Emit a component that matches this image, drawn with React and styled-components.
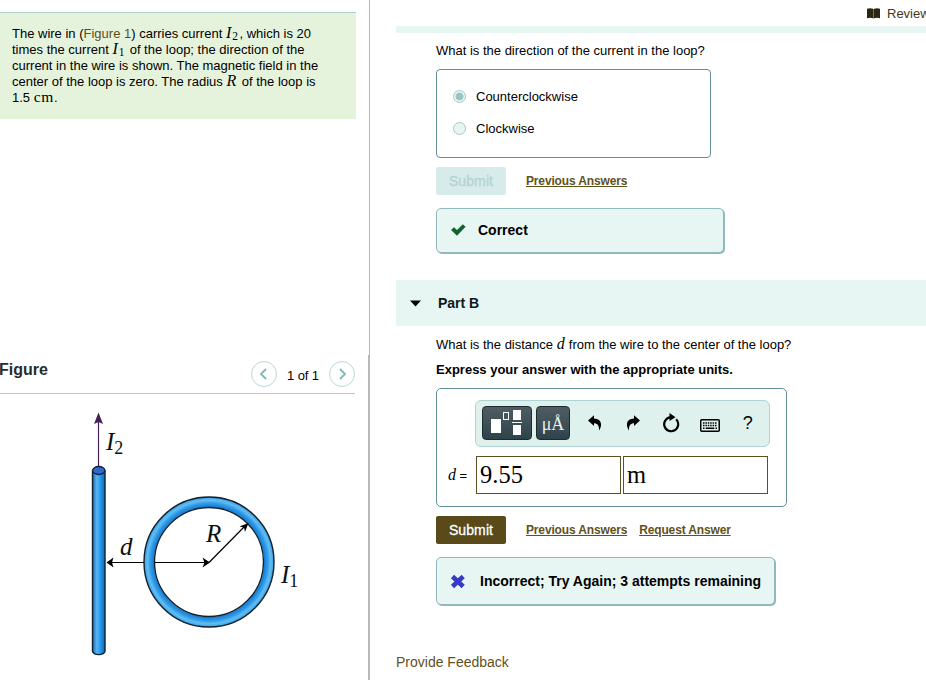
import React from "react";
import styled, { createGlobalStyle } from "styled-components";

const GlobalStyle = createGlobalStyle`
  * {
    box-sizing: border-box;
  }

  body {
    margin: 0;
    background-color: #fff;
    color: #000;
    font-family: "Liberation Sans", Arial, sans-serif;
    font-size: 13px;
    overflow: hidden;
  }

  svg {
    flex-shrink: 0;
  }
`;

const Page = styled.div`
  display: flex;
  width: 926px;
  height: 680px;
  overflow: hidden;
`;

const LeftPane = styled.div`
  display: flex;
  flex-direction: column;
  flex: 0 0 370px;
`;

const ProblemArea = styled.section`
  height: 355px;
  padding: 12px 13px 0 0;
  border-right: 1px solid #b9b9b3;
`;

const Problem = styled.div`
  height: 107px;
  padding: 13px 0 0 12px;
  border-top: 1px solid #b0cdd0;
  background-color: #e6f3dc;
  line-height: 16px;
`;

const Line = styled.div`
  white-space: nowrap;
  height: ${(props) => props.$height || "16px"};
  line-height: ${(props) => props.$height || "16px"};
  font-weight: ${(props) => (props.$bold ? "bold" : "normal")};
`;

const FigureLink = styled.a`
  color: #5d4f1a;
`;

const Var = styled.span`
  margin-right: ${(props) => props.$gap || "0"};
  font-family: "Liberation Serif", "Times New Roman", serif;
  font-style: ${(props) => (props.$upright ? "normal" : "italic")};
  font-size: ${(props) => props.$size || "16px"};
  line-height: 1px;
  letter-spacing: ${(props) => props.$spacing || "0"};

  sub {
    margin-left: 1px;
    font-size: 11.5px;
    font-style: normal;
    line-height: 0;
    vertical-align: -2px;
  }
`;

const FigureArea = styled.section`
  flex: 1;
  padding-right: 13px;
  border-right: 2px solid #b9b9b3;
`;

const FigureHeader = styled.header`
  display: flex;
  align-items: flex-start;
  justify-content: space-between;
  height: 39px;
  border-bottom: 1px solid #a9cfd1;
`;

const FigureTitle = styled.h2`
  margin: 5px 0 0 -1px;
  font-size: 16px;
  line-height: 20px;
  color: #262c2e;
`;

const Pager = styled.div`
  display: flex;
  align-items: center;
  gap: 10px;
  margin-top: 6px;

  span {
    padding-top: 2px;
    letter-spacing: -0.1px;
    white-space: nowrap;
  }
`;

const PagerButton = styled.button`
  display: flex;
  align-items: center;
  justify-content: center;
  width: 26px;
  height: 26px;
  padding: 0;
  border: 1px solid #b5dadb;
  border-radius: 50%;
  background-color: #fff;
`;

const Drawing = styled.svg`
  display: block;

  text {
    font-family: "Liberation Serif", "Times New Roman", serif;
    font-size: 25px;
    font-style: italic;
    fill: #0c1012;
  }

  .index {
    font-size: 18px;
    font-style: normal;
  }
`;

const RightPane = styled.main`
  display: flex;
  flex-direction: column;
  flex: 1;
  min-width: 0;
  padding-left: 26px;
`;

const TopBar = styled.div`
  display: flex;
  align-items: center;
  gap: 7px;
  height: 26px;
  padding-left: 471px;
  white-space: nowrap;
  color: #40391c;
`;

const Stripe = styled.div`
  height: 7px;
  background-color: #e8f6f3;
`;

const Part = styled.section`
  display: flex;
  flex-direction: column;
  align-items: flex-start;
  height: ${(props) => props.$height};
  padding: ${(props) => props.$top} 0 0 40px;
`;

const Choices = styled.div`
  display: flex;
  flex-direction: column;
  gap: 12px;
  width: 275px;
  height: 89px;
  margin-top: 9px;
  padding: 16px 0 0 16px;
  border: 1px solid #648f96;
  border-radius: 4px;
`;

const Choice = styled.label`
  display: flex;
  align-items: center;
  gap: 10px;
  height: 20px;
`;

const Radio = styled.span`
  width: 13px;
  height: 13px;
  border: 1px solid #a3c9cb;
  border-radius: 50%;
  background-color: #e8f6f3;
  background-image: ${(props) =>
    props.$checked
      ? "radial-gradient(circle, #9bc3c6 3.5px, transparent 4.3px)"
      : "none"};
`;

const Actions = styled.div`
  display: flex;
  align-items: center;
  height: 28px;
  margin-top: 9px;
`;

const Submit = styled.button`
  width: 70px;
  height: 28px;
  padding: 0;
  margin-right: 20px;
  border: 0;
  border-radius: 2px;
  font-family: inherit;
  font-size: 14px;
  letter-spacing: 0.1px;
  -webkit-text-stroke: 0.3px;
  color: ${(props) => (props.disabled ? "#b4d3d5" : "#fff")};
  background-color: ${(props) => (props.disabled ? "#d7ebea" : "#5a4a1a")};
`;

const ActionLink = styled.a`
  margin-right: 12px;
  font-size: 12px;
  font-weight: bold;
  letter-spacing: -0.15px;
  white-space: nowrap;
  text-decoration: underline;
  text-underline-offset: 1px;
  color: #5f511c;
`;

const Feedback = styled.div`
  display: flex;
  align-items: center;
  gap: ${(props) => props.$gap || "12px"};
  width: ${(props) => props.$width};
  height: ${(props) => props.$height};
  margin-top: 13px;
  padding-left: ${(props) => props.$indent || "14px"};
  padding-bottom: ${(props) => props.$bottom || "0"};
  border: 1px solid #8fb8bf;
  border-radius: 5px;
  box-shadow: 1px 1px 0 #8fb8bf;
  background-color: #e8f6f3;
  font-size: 14px;
  font-weight: bold;
  white-space: nowrap;
`;

const PartHeader = styled.header`
  display: flex;
  align-items: center;
  gap: 17px;
  height: 46px;
  padding-left: 14px;
  background-color: #e8f6f3;
  font-size: 14px;
  font-weight: bold;
  color: #0c1a1c;
`;

const AnswerBox = styled.div`
  width: 351px;
  height: 119px;
  margin-top: 3px;
  padding: 11px 0 0 11px;
  border: 1px solid #648f96;
  border-radius: 5px;
`;

const Toolbar = styled.div`
  display: flex;
  align-items: center;
  width: 295px;
  height: 47px;
  margin-left: 27px;
  padding: 0 0 1px 6px;
  border: 1px solid #b0d4d5;
  border-radius: 6px;
  background-color: #def1ec;
`;

const DarkButton = styled.button`
  display: flex;
  align-items: center;
  justify-content: center;
  width: ${(props) => props.$width};
  height: 34px;
  margin-right: 4px;
  padding: ${(props) => props.$padding || "0"};
  border: 1px solid #1d2b30;
  border-radius: 4px;
  background-image: linear-gradient(#4f5d63, #2f434b);
  font-family: "Liberation Serif", "Times New Roman", serif;
  font-size: 18px;
  color: #e9f0f0;
`;

const Tools = styled.div`
  display: flex;
  padding-left: 2px;
`;

const Tool = styled.span`
  display: flex;
  align-items: center;
  justify-content: center;
  width: 38.2px;
  height: 34px;
  padding-top: ${(props) => props.$top || "0"};
  font-size: 18px;
`;

const AnswerRow = styled.div`
  display: flex;
  align-items: center;
  margin-top: 9px;
`;

const Label = styled.span`
  width: 28px;
  white-space: nowrap;
`;

const Field = styled.div`
  width: 145px;
  height: 38px;
  margin-right: 2px;
  padding-left: 3px;
  border: 1px solid #5e5022;
  font-family: "Liberation Serif", "Times New Roman", serif;
  font-size: 24.5px;
  line-height: 36px;
`;

const ProvideFeedback = styled.a`
  font-size: 14px;
  line-height: 18px;
  color: #5f511c;
`;

const BookIcon = () => (
  <svg width="13" height="11" viewBox="0 0 13 11">
    <path
      d="M0 .7Q3-.3 6 .7V10.2Q3 9.4 0 10.2ZM7 .7Q10-.3 13 .7V10.2Q10 9.4 7 10.2Z"
      fill="#2b2712"
    />
    <path d="M6.5 1V10.5" stroke="#77704a" />
  </svg>
);

const CheckIcon = () => (
  <svg width="15" height="12" viewBox="0 0 15 12">
    <path d="M0 6 3 3.3 6 6 11.8 0.3 14.6 2.8 6 11.7Z" fill="#136334" />
  </svg>
);

const CrossIcon = () => (
  <svg width="16" height="15" viewBox="0 0 16 15">
    <path d="M2.5 2.5 13.2 12.5M13.2 2.5 2.5 12.5" stroke="#373bc4" strokeWidth="4.6" />
  </svg>
);

const Chevron = ({ points }) => (
  <svg width="12" height="14" viewBox="0 0 12 14">
    <polyline points={points} fill="none" stroke="#83b4b8" strokeWidth="1.8" />
  </svg>
);

const TemplateIcon = () => (
  <svg width="32" height="26" viewBox="0 0 32 26">
    <rect x="0" y="9" width="10" height="14" fill="#fff" />
    <rect x="12.5" y="2.5" width="5" height="7" fill="none" stroke="#fff" />
    <rect x="22" y="0" width="8" height="10" fill="#fff" />
    <rect x="21" y="12" width="10" height="1" fill="#fff" />
    <rect x="22" y="15" width="8" height="10" fill="#fff" />
  </svg>
);

const ArrowIcon = ({ flip }) => (
  <svg width="16" height="16" viewBox="0 0 16 16">
    <path
      d="M1 5.5 7 0.3V3.4C13.5 3.6 16.3 8.5 12 15.7 12.3 10.5 10.6 8.3 7 8.2V11Z"
      fill="#000"
      transform={flip ? "matrix(-1 0 0 1 16 0)" : undefined}
    />
  </svg>
);

const ResetIcon = () => (
  <svg width="18" height="20" viewBox="0 0 18 20">
    <path
      d="M9 4.2A7 7 0 1 0 14.2 6.3"
      fill="none"
      stroke="#000"
      strokeWidth="2.2"
    />
    <path d="M7.5 0 13.5 4.2 7.5 8Z" fill="#000" />
  </svg>
);

const KeyboardIcon = () => (
  <svg width="20" height="13" viewBox="0 0 20 13">
    <rect x="0.75" y="0.75" width="18.5" height="11.5" rx="1" fill="none" stroke="#000" strokeWidth="1.5" />
    <path
      d="M3 4H17M3 6.5H17"
      stroke="#000"
      strokeWidth="1.4"
      strokeDasharray="1.5 0.9"
    />
    <path d="M3 9.2H4.5M5.7 9.2H14.3M15.5 9.2H17" stroke="#000" strokeWidth="1.4" />
  </svg>
);

// Long straight wire with current I2 and the loop at distance d
const WireAndLoop = () => (
  <Drawing width="355" height="286" viewBox="0 394 355 286">
    <defs>
      <linearGradient id="wire">
        <stop offset="0" stopColor="#1669b4" />
        <stop offset="0.35" stopColor="#59b5f3" />
        <stop offset="0.65" stopColor="#2196ea" />
        <stop offset="1" stopColor="#1264b0" />
      </linearGradient>
      <radialGradient
        id="loop"
        gradientUnits="userSpaceOnUse"
        cx="209"
        cy="562"
        r="65"
      >
        <stop offset="0.84" stopColor="#1477cf" />
        <stop offset="0.9" stopColor="#2b99e8" />
        <stop offset="0.95" stopColor="#62bdf3" />
        <stop offset="1" stopColor="#3b9fe2" />
      </radialGradient>
    </defs>

    <path d="M98.5 420V468" stroke="#471f57" strokeWidth="1.2" />
    <path d="M98.5 412.5 103 424 98.5 422 94 424Z" fill="#471f57" />
    <text x="106" y="450">
      I<tspan className="index" dy="4">2</tspan>
    </text>

    <path
      d="M92.5 471V651A6 3.5 0 0 0 105 651V471Z"
      fill="url(#wire)"
      stroke="#10222e"
      strokeWidth="1.4"
    />
    <ellipse cx="98.75" cy="470.5" rx="6.2" ry="4" fill="#3166d3" stroke="#10222e" strokeWidth="1.3" />

    <path d="M110 562.5H207M209 562.5 245 526" fill="none" stroke="#000" strokeWidth="1.2" />
    <circle cx="209" cy="562" r="60" fill="none" stroke="url(#loop)" strokeWidth="10" />
    <circle cx="209" cy="562" r="65" fill="none" stroke="#10222e" strokeWidth="1.4" />
    <circle cx="209" cy="562" r="54.5" fill="none" stroke="#10222e" strokeWidth="1.4" />

    <path d="M106.5 562.5 113.5 557.5 112 562.5 113.5 567.5Z" />
    <path d="M210 562.5 202.5 557.5 204.5 562.5 202.5 567.5Z" />
    <path d="M248.5 523 239.5 526.5 244 527.5 245 532Z" />
    <text x="120" y="555">d</text>
    <text x="206" y="542">R</text>
    <text x="281" y="583">
      I<tspan className="index" dy="4">1</tspan>
    </text>
  </Drawing>
);

const App = () => (
  <Page>
    <GlobalStyle />
    <LeftPane>
      <ProblemArea>
        <Problem>
          <Line>
            The wire in (<FigureLink>Figure 1</FigureLink>) carries current{" "}
            <Var $gap="1.5px">
              I<sub>2</sub>
            </Var>
            , which is 20
          </Line>
          <Line>
            times the current{" "}
            <Var $gap="1.5px">
              I<sub>1</sub>
            </Var>{" "}
            of the loop; the direction of the
          </Line>
          <Line>current in the wire is shown. The magnetic field in the</Line>
          <Line>
            center of the loop is zero. The radius{" "}
            <Var $gap="2px">R</Var> of the loop is
          </Line>
          <Line>
            1.5{" "}
            <Var $upright $size="15.5px" $spacing="0.7px">
              cm
            </Var>
            .
          </Line>
        </Problem>
      </ProblemArea>
      <FigureArea>
        <FigureHeader>
          <FigureTitle>Figure</FigureTitle>
          <Pager>
            <PagerButton>
              <Chevron points="8,2 3,7 8,12" />
            </PagerButton>
            <span>1 of 1</span>
            <PagerButton>
              <Chevron points="4,2 9,7 4,12" />
            </PagerButton>
          </Pager>
        </FigureHeader>
        <WireAndLoop />
      </FigureArea>
    </LeftPane>

    <RightPane>
      <TopBar>
        <BookIcon /> Review
      </TopBar>
      <Stripe />
      <Part $height="247px" $top="8px">
        <Line $height="19px">
          What is the direction of the current in the loop?
        </Line>
        <Choices>
          <Choice>
            <Radio $checked /> Counterclockwise
          </Choice>
          <Choice>
            <Radio /> Clockwise
          </Choice>
        </Choices>
        <Actions>
          <Submit disabled>Submit</Submit>
          <ActionLink>Previous Answers</ActionLink>
        </Actions>
        <Feedback $width="288px" $height="45px" $bottom="1px">
          <CheckIcon /> Correct
        </Feedback>
      </Part>

      <PartHeader>
        <svg width="11" height="7" viewBox="0 0 11 7">
          <path d="M0 0.5H11L5.5 6.5Z" />
        </svg>
        Part B
      </PartHeader>
      <Part $height="327px" $top="9px">
        <Line $height="19px">
          What is the distance <Var $gap="0.5px">d</Var> from the wire to the
          center of the loop?
        </Line>
        <Line $bold $height="31px">
          Express your answer with the appropriate units.
        </Line>
        <AnswerBox>
          <Toolbar>
            <DarkButton $width="50px">
              <TemplateIcon />
            </DarkButton>
            <DarkButton $width="34px" $padding="3px 0 0">
              μÅ
            </DarkButton>
            <Tools>
              <Tool>
                <ArrowIcon />
              </Tool>
              <Tool>
                <ArrowIcon flip />
              </Tool>
              <Tool>
                <ResetIcon />
              </Tool>
              <Tool $top="4px">
                <KeyboardIcon />
              </Tool>
              <Tool>?</Tool>
            </Tools>
          </Toolbar>
          <AnswerRow>
            <Label>
              <Var>d</Var> =
            </Label>
            <Field>9.55</Field>
            <Field>m</Field>
          </AnswerRow>
        </AnswerBox>
        <Actions>
          <Submit>Submit</Submit>
          <ActionLink>Previous Answers</ActionLink>
          <ActionLink>Request Answer</ActionLink>
        </Actions>
        <Feedback $width="339px" $height="48px" $indent="13px" $gap="14px">
          <CrossIcon /> Incorrect; Try Again; 3 attempts remaining
        </Feedback>
      </Part>
      <ProvideFeedback>Provide Feedback</ProvideFeedback>
    </RightPane>
  </Page>
);

export default App;
